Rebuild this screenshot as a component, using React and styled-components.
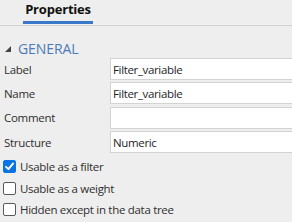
import React from "react";
import styled, { createGlobalStyle } from "styled-components";

const Global = createGlobalStyle`
  html, body { margin: 0; padding: 0; background: #eeeeee; }
  body { font-family: "Open Sans", "Noto Sans", sans-serif; color: #333333; overflow: hidden; }
  * { box-sizing: border-box; }
`;

const Panel = styled.div`
  width: 292px;
  height: 222px;
  overflow: hidden;
  background: #eeeeee;
`;

const TabBar = styled.div`
  height: 26px;
  border-bottom: 1px solid #d2d2d2;
  display: flex;
  align-items: flex-end;
  padding-left: 23px;
`;

const Tab = styled.div`
  height: 25px;
  width: 70px;
  display: flex;
  align-items: center;
  justify-content: center;
  font-weight: 700;
  font-size: 13px;
  letter-spacing: -0.2px;
  color: #111111;
  border-bottom: 3px solid ${(p) => (p.active ? "#3a78c9" : "transparent")};
  padding-bottom: 2px;
  margin-bottom: 1px;
`;

const SectionHeader = styled.div`
  display: flex;
  align-items: center;
  height: 20px;
  margin-top: 12px;
  padding-left: 5px;
  gap: 7px;
  color: #4a7bb8;
  font-size: 14px;
  letter-spacing: -0.1px;
`;

const Caret = styled.span`
  width: 0;
  height: 0;
  border-left: 6px solid transparent;
  border-bottom: 6px solid #444444;
  margin-top: 1px;
`;

const Fields = styled.div`
  display: flex;
  flex-direction: column;
  gap: 2.4px;
`;

const Row = styled.div`
  display: flex;
  align-items: center;
  height: 22px;
`;

const Label = styled.div`
  width: 110px;
  flex-shrink: 0;
  padding-left: 4px;
  font-size: 11.5px;
  letter-spacing: -0.3px;
  color: #2e2e2e;
`;

const Input = styled.div`
  width: 200px;
  flex-shrink: 0;
  height: 22px;
  background: #ffffff;
  border: 1px solid #d3d3d3;
  padding-left: 2px;
  display: flex;
  align-items: center;
  font-size: 11.5px;
  letter-spacing: -0.35px;
  color: #1e1e1e;
`;

const Checks = styled.div`
  display: flex;
  flex-direction: column;
  gap: 8.5px;
  margin-top: 7px;
  padding-left: 3px;
`;

const CheckRow = styled.div`
  display: flex;
  align-items: center;
  gap: 4px;
  height: 13px;
  font-size: 11.5px;
  letter-spacing: -0.3px;
  color: #2e2e2e;
`;

const Box = styled.span`
  width: 13px;
  height: 13px;
  flex-shrink: 0;
  border-radius: 2px;
  border: 1px solid ${(p) => (p.checked ? "#0a74e4" : "#5a5a5a")};
  background: ${(p) => (p.checked ? "#0a74e4" : "#ffffff")};
  display: flex;
  align-items: center;
  justify-content: center;
`;

function Check({ checked, children }) {
  return (
    <CheckRow>
      <Box checked={checked}>
        {checked && (
          <svg width="11" height="11" viewBox="0 0 11 11">
            <path d="M2 5.8 L4.4 8.2 L9 2.6" fill="none" stroke="#ffffff" strokeWidth="1.9" strokeLinecap="round" strokeLinejoin="round" />
          </svg>
        )}
      </Box>
      <span>{children}</span>
    </CheckRow>
  );
}

const fields = [
  ["Label", "Filter_variable"],
  ["Name", "Filter_variable"],
  ["Comment", ""],
  ["Structure", "Numeric"],
];

export default function App() {
  return (
    <Panel>
      <Global />
      <TabBar>
        <Tab active>Properties</Tab>
      </TabBar>
      <SectionHeader>
        <Caret />
        GENERAL
      </SectionHeader>
      <Fields>
        {fields.map(([l, v]) => (
          <Row key={l}>
            <Label>{l}</Label>
            <Input>{v}</Input>
          </Row>
        ))}
      </Fields>
      <Checks>
        <Check checked>Usable as a filter</Check>
        <Check>Usable as a weight</Check>
        <Check>Hidden except in the data tree</Check>
      </Checks>
    </Panel>
  );
}
